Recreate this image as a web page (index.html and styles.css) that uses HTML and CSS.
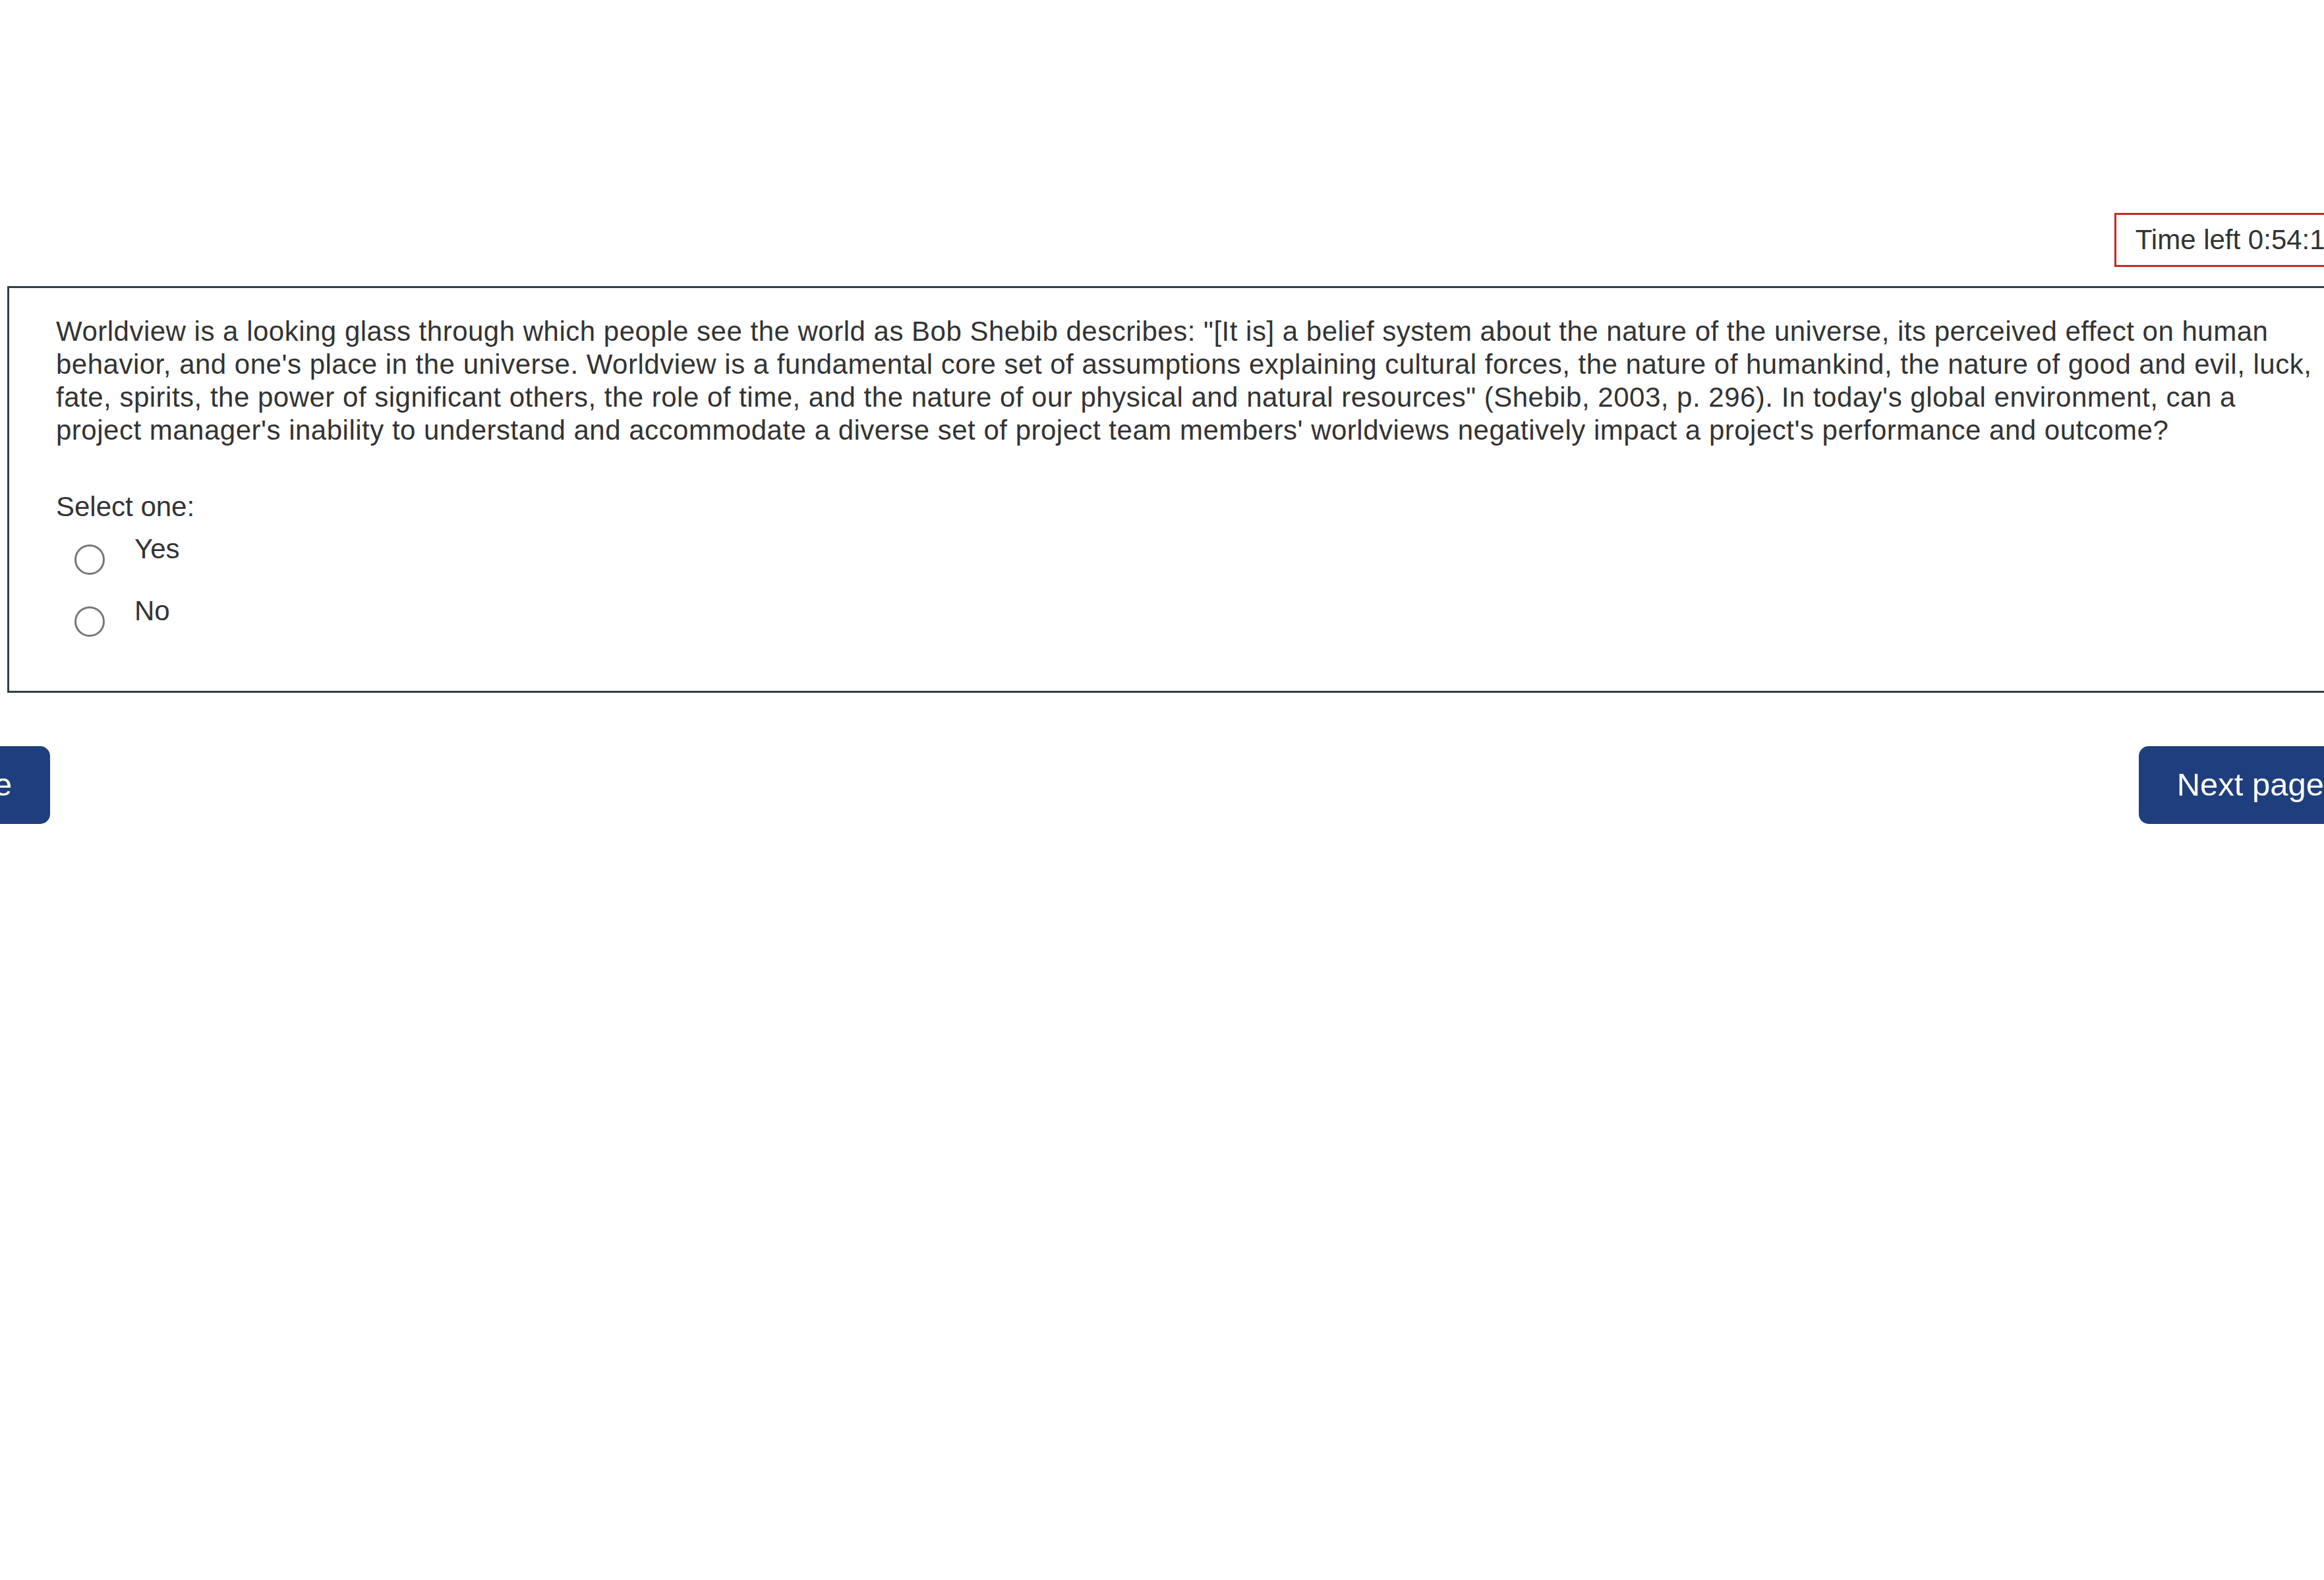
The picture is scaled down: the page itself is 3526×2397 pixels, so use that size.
FILE: index.html
```html
<!DOCTYPE html>
<html lang="en">
<head>
<meta charset="utf-8">
<title>Quiz</title>
<link rel="stylesheet" href="styles.css">
</head>
<body>
<div class="page">
  <div class="timer-row">
    <div class="timer">Time left 0:54:12</div>
  </div>
  <div class="question">
    <p class="qtext">Worldview is a looking glass through which people see the world as Bob Shebib describes: "[It is] a belief system about the nature of the universe, its perceived effect on human behavior, and one's place in the universe. Worldview is a fundamental core set of assumptions explaining cultural forces, the nature of humankind, the nature of good and evil, luck, fate, spirits, the power of significant others, the role of time, and the nature of our physical and natural resources" (Shebib, 2003, p. 296). In today's global environment, can a project manager's inability to understand and accommodate a diverse set of project team members' worldviews negatively impact a project's performance and outcome?</p>
    <div class="prompt">Select one:</div>
    <div class="answers">
      <label class="option"><span class="radio"></span><span class="label">Yes</span></label>
      <label class="option"><span class="radio"></span><span class="label">No</span></label>
    </div>
  </div>
  <div class="nav">
    <button class="btn">Previous page</button>
    <button class="btn">Next page</button>
  </div>
</div>
</body>
</html>
```

FILE: styles.css
```css
html, body {
  margin: 0;
  padding: 0;
  background: #ffffff;
  overflow: hidden;
}

body {
  font-family: "Liberation Sans", Arial, sans-serif;
  color: #333333;
  width: 3526px;
  height: 2397px;
}

.page {
  margin-left: 11px;
  width: 3573px;
  padding-top: 323px;
}

.timer-row {
  display: flex;
  justify-content: flex-end;
  margin-bottom: 29px;
}

.timer {
  border: 3px solid #c9281d;
  padding: 13px 30px 13px 29px;
  font-size: 42px;
  line-height: 50px;
  color: #333333;
  white-space: nowrap;
}

.question {
  border: 3px solid #343e47;
  padding: 41px 61px 52px 71px;
}

.qtext {
  margin: 0;
  font-size: 42px;
  line-height: 50px;
  letter-spacing: 0.5px;
}

.prompt {
  margin-top: 66px;
  font-size: 42px;
  line-height: 50px;
}

.answers {
  margin-top: 14px;
  padding-left: 28px;
}

.option {
  display: flex;
  align-items: flex-start;
  margin-bottom: 30px;
  font-size: 42px;
  line-height: 50px;
}

.radio {
  box-sizing: border-box;
  width: 46px;
  height: 46px;
  margin-top: 18px;
  border: 3px solid #767676;
  border-radius: 50%;
  background: #ffffff;
  flex: none;
}

.label {
  margin-left: 45px;
}

.nav {
  display: flex;
  justify-content: space-between;
  margin-left: -364px;
  margin-top: 81px;
}

.btn {
  font-family: "Liberation Sans", Arial, sans-serif;
  font-size: 49px;
  line-height: 59px;
  padding: 29px 58px 30px 58px;
  background: #1f3e7d;
  color: #ffffff;
  border: none;
  border-radius: 15px;
  white-space: nowrap;
}
```
